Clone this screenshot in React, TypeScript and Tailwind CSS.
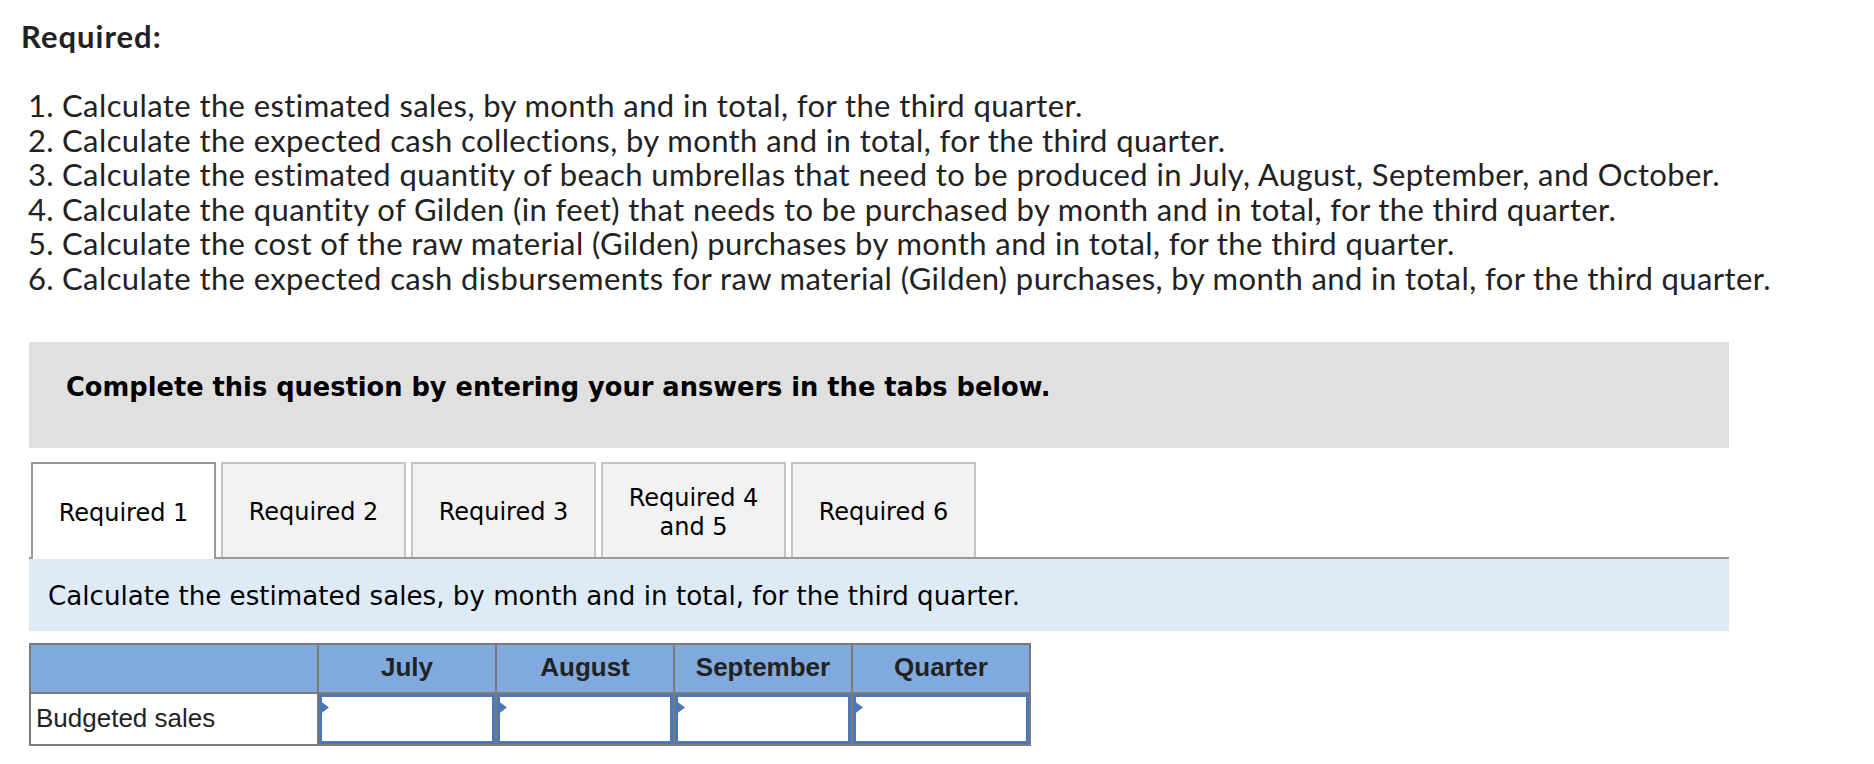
import React from "react";

const requirements = [
  "Calculate the estimated sales, by month and in total, for the third quarter.",
  "Calculate the expected cash collections, by month and in total, for the third quarter.",
  "Calculate the estimated quantity of beach umbrellas that need to be produced in July, August, September, and October.",
  "Calculate the quantity of Gilden (in feet) that needs to be purchased by month and in total, for the third quarter.",
  "Calculate the cost of the raw material (Gilden) purchases by month and in total, for the third quarter.",
  "Calculate the expected cash disbursements for raw material (Gilden) purchases, by month and in total, for the third quarter.",
];

const tabs = ["Required 1", "Required 2", "Required 3", "Required 4 and 5", "Required 6"];
const months = ["July", "August", "September", "Quarter"];

function InputCell() {
  return (
    <td className="border-2 border-[#7a7a7a] p-0 h-[52px]">
      <div className="relative h-full w-full border-[3px] border-[#4a78b8] bg-white">
        <svg className="absolute -left-[3px] top-[3px]" width="10" height="15" viewBox="0 0 10 15">
          <polygon points="0,0 10,7.5 0,15" fill="#4a78b8" />
        </svg>
      </div>
    </td>
  );
}

export default function App() {
  return (
    <div className="w-[1874px] h-[764px] overflow-hidden bg-white text-[#222]">
      {/* Required list */}
      <div className="pt-[17px] pl-[21px] font-['Lato',sans-serif]">
        <div className="text-[31px] font-bold leading-[38px] tracking-[1px]">Required:</div>
      </div>
      <ol className="mt-[33px] font-['Lato',sans-serif] text-[31px] leading-[34.5px] tracking-[0.4px]">
        {requirements.map((r, i) => (
          <li key={i} className="flex">
            <span className="w-[62px] shrink-0 text-right pr-[8px]">{i + 1}.</span>
            <span className="whitespace-nowrap">{r}</span>
          </li>
        ))}
      </ol>

      {/* Instructions box */}
      <div className="ml-[29px] mt-[47px] w-[1700px] h-[106px] bg-[#e0e0e0] pl-[37px] pt-[26px] font-['DejaVu_Sans',Verdana,sans-serif] text-[25.7px] leading-[38px] font-bold text-black">
        Complete this question by entering your answers in the tabs below.
      </div>

      {/* Tabs */}
      <div className="ml-[29px] mt-[14px] w-[1700px] pl-[2px] flex gap-[5px] border-b-2 border-[#999] font-['DejaVu_Sans',Verdana,sans-serif] text-[24px] text-black">
        {tabs.map((t, i) => (
          <div
            key={t}
            className={
              i === 0
                ? "relative -mb-[2px] w-[185px] h-[97px] pt-[4px] flex items-center justify-center text-center leading-[29px] bg-white border-2 border-b-0 border-[#999] px-3"
                : "w-[185px] h-[95px] pt-[4px] flex items-center justify-center text-center leading-[29px] bg-[#f2f2f2] border-2 border-b-0 border-[#c4c4c4] px-5"
            }
          >
            {t}
          </div>
        ))}
      </div>

      {/* Description */}
      <div className="ml-[29px] w-[1700px] h-[72px] bg-[#deebf7] pl-[19px] pt-[4px] flex items-center font-['DejaVu_Sans',Verdana,sans-serif] text-[26.15px] text-black">
        Calculate the estimated sales, by month and in total, for the third quarter.
      </div>

      {/* Table */}
      <table className="ml-[29px] mt-[12px] border-collapse font-['Liberation_Sans',Arial,sans-serif] text-[26px] text-[#222]">
        <thead>
          <tr className="bg-[#80aade] h-[49px]">
            <th className="w-[288px] border-2 border-[#7a7a7a]"></th>
            {months.map((m) => (
              <th key={m} className="w-[178px] border-2 border-[#7a7a7a] font-bold text-center pb-[3px]">
                {m}
              </th>
            ))}
          </tr>
        </thead>
        <tbody>
          <tr>
            <td className="border-2 border-[#7a7a7a] pl-[5px] pb-[2px] text-left">Budgeted sales</td>
            {months.map((m) => (
              <InputCell key={m} />
            ))}
          </tr>
        </tbody>
      </table>
    </div>
  );
}
